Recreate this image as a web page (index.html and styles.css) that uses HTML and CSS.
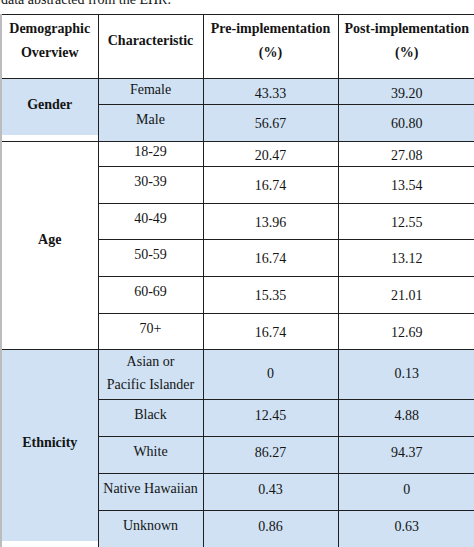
FILE: index.html
```html
<!DOCTYPE html>
<html>
<head>
<meta charset="utf-8">
<link rel="stylesheet" href="styles.css">
</head>
<body>
<div class="caption">data abstracted from the EHR.</div>
<table class="demo">
  <colgroup>
    <col class="c1"><col class="c2"><col class="c3"><col class="c4">
  </colgroup>
  <thead>
    <tr class="head">
      <th class="h2l">Demographic<br>Overview</th>
      <th class="h1l">Characteristic</th>
      <th class="h2l">Pre-implementation<br>(%)</th>
      <th class="h2l">Post-implementation<br>(%)</th>
    </tr>
  </thead>
  <tbody class="blue">
    <tr class="r-female">
      <td class="grp shaded" rowspan="2">Gender</td>
      <td class="k">Female</td><td class="n">43.33</td><td class="n">39.20</td>
    </tr>
    <tr class="r-male">
      <td class="k">Male</td><td class="n">56.67</td><td class="n">60.80</td>
    </tr>
  </tbody>
  <tbody>
    <tr class="r-1829">
      <td class="grp" rowspan="6">Age</td>
      <td class="k">18-29</td><td class="n">20.47</td><td class="n">27.08</td>
    </tr>
    <tr class="r-age"><td class="k">30-39</td><td class="n">16.74</td><td class="n">13.54</td></tr>
    <tr class="r-age r36"><td class="k">40-49</td><td class="n">13.96</td><td class="n">12.55</td></tr>
    <tr class="r-age"><td class="k">50-59</td><td class="n">16.74</td><td class="n">13.12</td></tr>
    <tr class="r-age"><td class="k">60-69</td><td class="n">15.35</td><td class="n">21.01</td></tr>
    <tr class="r-age r36"><td class="k">70+</td><td class="n">16.74</td><td class="n">12.69</td></tr>
  </tbody>
  <tbody class="blue">
    <tr class="r-asian">
      <td class="grp shaded" rowspan="5">Ethnicity</td>
      <td class="k two">Asian or<br>Pacific Islander</td><td class="n">0</td><td class="n">0.13</td>
    </tr>
    <tr class="r-eth"><td class="k">Black</td><td class="n">12.45</td><td class="n">4.88</td></tr>
    <tr class="r-eth"><td class="k">White</td><td class="n">86.27</td><td class="n">94.37</td></tr>
    <tr class="r-eth"><td class="k">Native Hawaiian</td><td class="n">0.43</td><td class="n">0</td></tr>
    <tr class="r-eth"><td class="k">Unknown</td><td class="n">0.86</td><td class="n">0.63</td></tr>
  </tbody>
</table>
</body>
</html>
```

FILE: styles.css
```css
html, body {
  margin: 0;
  padding: 0;
  background: #ffffff;
}

body {
  font-family: "Liberation Serif", "Times New Roman", serif;
  font-size: 14px;
  color: #141414;
  overflow: hidden;
}

.caption {
  margin: -8px 0 6px 1px;
  height: 16px;
  line-height: 16px;
  font-size: 14px;
  white-space: nowrap;
}

.demo {
  border-collapse: collapse;
  table-layout: fixed;
  width: 474px;
  border-top: 1px solid #333333;
  font-family: "Liberation Serif", "Times New Roman", serif;
  font-size: 14px;
}

.c1 { width: 97px; }
.c2 { width: 105px; }
.c3 { width: 135px; }
.c4 { width: 137px; }

.demo th,
.demo td {
  font-family: "Liberation Serif", "Times New Roman", serif;
  font-size: 14px;
  color: #141414;
  padding: 0;
  text-align: center;
  vertical-align: top;
  border: 1px solid #1f1f1f;
  line-height: 17px;
}

.demo th:first-child,
.demo td.grp {
  border-left: 2px solid #bcbcbc;
}

.demo th:last-child,
.demo td:last-child {
  border-right: none;
}

.head { height: 64px; }

.demo th {
  font-weight: bold;
  line-height: 24px;
}

.demo th.h2l { padding-top: 2px; }
.demo th.h1l { padding-top: 14px; }

.blue td { background: #cfe1f3; }

.demo td.grp {
  font-weight: bold;
  vertical-align: middle;
  padding-bottom: 12px;
}

.demo td.grp.shaded {
  background: linear-gradient(#cfe1f3, #cfe1f3) no-repeat top left / 100% calc(100% - 6px), #ffffff;
}

.r-female { height: 26px; }
.r-male { height: 37px; }
.r-1829 { height: 25px; }
.r-age { height: 37px; }
.r-age.r36 { height: 36px; }
.r-asian { height: 50px; }
.r-eth { height: 37px; }

.demo td.k { padding-top: 6px; }
.demo td.n { padding-top: 10px; }

.r-female td.k { padding-top: 2px; }
.r-female td.n { padding-top: 6px; }

.r-1829 td.k { padding-top: 1px; }
.r-1829 td.n { padding-top: 5px; }

.r-eth td.n { padding-top: 7px; }

.r-asian td.k.two { padding-top: 0; line-height: 23px; }
.r-asian td.n { padding-top: 15px; }
```
